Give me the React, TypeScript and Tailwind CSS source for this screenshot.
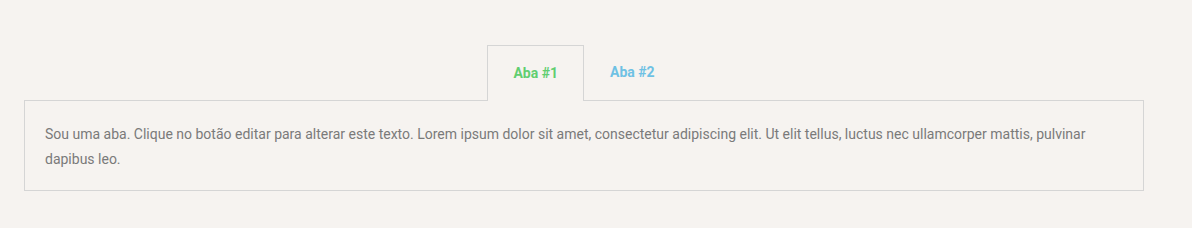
import React, { useState } from "react";

export default function App() {
  const [active, setActive] = useState(0);
  const tabs = [
    { title: "Aba #1", content: "Sou uma aba. Clique no botão editar para alterar este texto. Lorem ipsum dolor sit amet, consectetur adipiscing elit. Ut elit tellus, luctus nec ullamcorper mattis, pulvinar dapibus leo." },
    { title: "Aba #2", content: "Sou uma aba. Clique no botão editar para alterar este texto. Lorem ipsum dolor sit amet, consectetur adipiscing elit. Ut elit tellus, luctus nec ullamcorper mattis, pulvinar dapibus leo." },
  ];
  return (
    <div className="w-[1192px] h-[228px] bg-[#f6f3f0] pt-[45px] font-['Roboto',sans-serif]">
      <div className="ml-[24px] w-[1120px]">
        <div className="flex justify-center">
          {tabs.map((t, i) => (
            <button
              key={i}
              onClick={() => setActive(i)}
              className={
                i === active
                  ? "relative z-10 -mb-px px-[25px] pt-[19px] pb-[20px] text-[14px] leading-[15px] font-bold text-[#61ce70] bg-[#f6f3f0] border border-b-0 border-[#d5d5d5]"
                  : "px-[25px] pt-[19px] pb-[20px] text-[14px] leading-[15px] font-bold text-[#6ec1e4] border border-transparent border-b-0"
              }
            >
              {t.title}
            </button>
          ))}
        </div>
        <div className="border border-[#d5d5d5] px-[20px] pt-[21px] pb-[18px] text-[14px] leading-[25px] text-[#7a7a7a]">
          {tabs[active].content}
        </div>
      </div>
    </div>
  );
}
